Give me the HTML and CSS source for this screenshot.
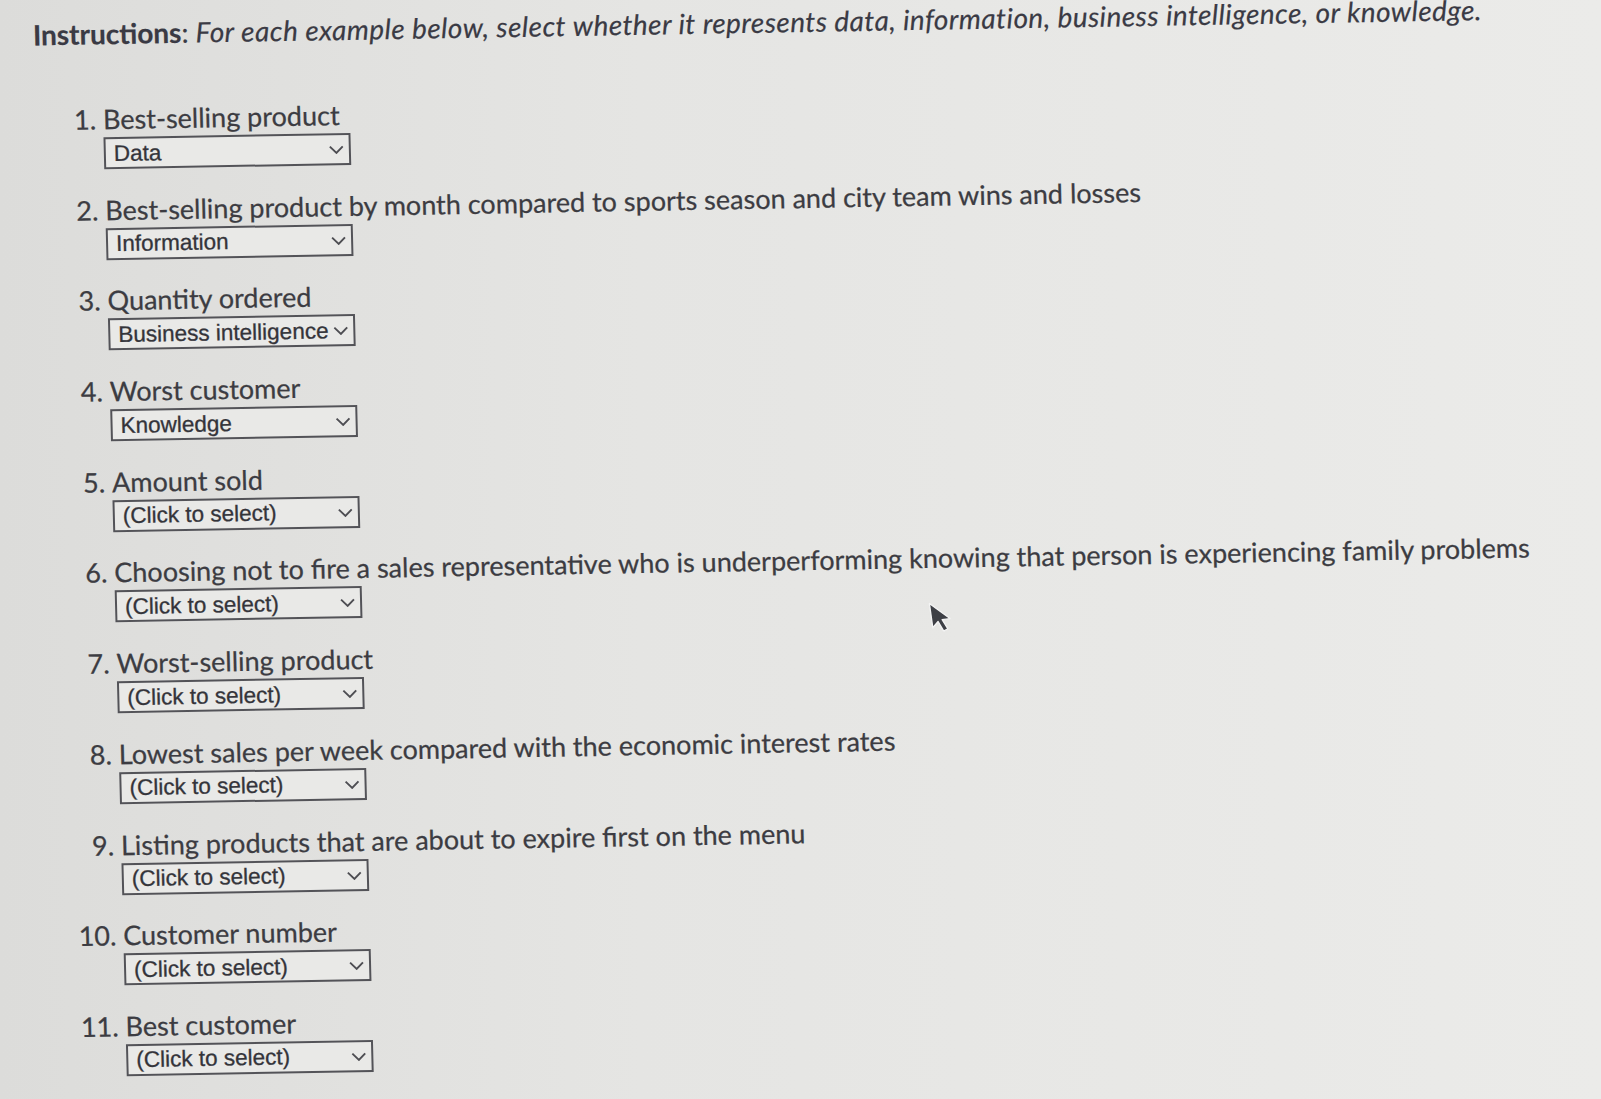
FILE: index.html
```html
<!DOCTYPE html>
<html lang="en">
<head>
<meta charset="utf-8">
<title>Data, information, business intelligence, or knowledge</title>
<link rel="stylesheet" href="styles.css">
</head>
<body>
<div class="page">
  <p class="instructions"><strong>Instructions</strong>: <em>For each example below, select whether it represents data, information, business intelligence, or knowledge.</em></p>
  <ol class="items">
    <li><div class="label">Best-selling product</div><div class="select"><span>Data</span><svg class="chev" viewBox="0 0 14 8"><path d="M1 1 L7 7 L13 1"/></svg></div></li>
    <li><div class="label">Best-selling product by month compared to sports season and city team wins and losses</div><div class="select"><span>Information</span><svg class="chev" viewBox="0 0 14 8"><path d="M1 1 L7 7 L13 1"/></svg></div></li>
    <li><div class="label">Quantity ordered</div><div class="select"><span>Business intelligence</span><svg class="chev" viewBox="0 0 14 8"><path d="M1 1 L7 7 L13 1"/></svg></div></li>
    <li><div class="label">Worst customer</div><div class="select"><span>Knowledge</span><svg class="chev" viewBox="0 0 14 8"><path d="M1 1 L7 7 L13 1"/></svg></div></li>
    <li><div class="label">Amount sold</div><div class="select"><span>(Click to select)</span><svg class="chev" viewBox="0 0 14 8"><path d="M1 1 L7 7 L13 1"/></svg></div></li>
    <li><div class="label">Choosing not to fire a sales representative who is underperforming knowing that person is experiencing family problems</div><div class="select"><span>(Click to select)</span><svg class="chev" viewBox="0 0 14 8"><path d="M1 1 L7 7 L13 1"/></svg></div></li>
    <li><div class="label">Worst-selling product</div><div class="select"><span>(Click to select)</span><svg class="chev" viewBox="0 0 14 8"><path d="M1 1 L7 7 L13 1"/></svg></div></li>
    <li><div class="label">Lowest sales per week compared with the economic interest rates</div><div class="select"><span>(Click to select)</span><svg class="chev" viewBox="0 0 14 8"><path d="M1 1 L7 7 L13 1"/></svg></div></li>
    <li><div class="label">Listing products that are about to expire first on the menu</div><div class="select"><span>(Click to select)</span><svg class="chev" viewBox="0 0 14 8"><path d="M1 1 L7 7 L13 1"/></svg></div></li>
    <li><div class="label">Customer number</div><div class="select"><span>(Click to select)</span><svg class="chev" viewBox="0 0 14 8"><path d="M1 1 L7 7 L13 1"/></svg></div></li>
    <li><div class="label">Best customer</div><div class="select"><span>(Click to select)</span><svg class="chev" viewBox="0 0 14 8"><path d="M1 1 L7 7 L13 1"/></svg></div></li>
  </ol>
</div>
<svg class="cursor" viewBox="0 0 18 27"><path d="M2 1 L2 21 L7 16.5 L10.5 25 L14 23.5 L10.5 15.5 L17 15.5 Z"/></svg>
</body>
</html>
```

FILE: styles.css
```css
html, body {
  margin: 0;
  width: 1601px;
  height: 1099px;
  overflow: hidden;
}

body {
  background: linear-gradient(90deg, #dcdcda 0%, #e5e5e3 40%, #ebebe9 100%);
  font-family: Lato, "Open Sans", sans-serif;
  color: #3c3c42;
  position: relative;
}

.page {
  transform: matrix(1, -0.0175, 0.0248, 1, 0, 0);
  transform-origin: 0 0;
  padding: 20px 0 0 32px;
}

.instructions {
  display: inline-block;
  margin: 0;
  font-size: 28px;
  line-height: 30px;
  white-space: nowrap;
  color: #3a3a44;
  -webkit-text-stroke: 0.2px #3a3a44;
}

.instructions strong {
  font-weight: 700;
}

.instructions em {
  font-style: italic;
  letter-spacing: 0.45px;
}

.items {
  margin: 56px 0 0;
  padding: 0 0 0 68px;
  list-style: decimal;
}

.items li {
  font-size: 27px;
  line-height: 30px;
  margin-bottom: 25.7px;
  -webkit-text-stroke: 0.25px #3c3c42;
}

.label {
  white-space: nowrap;
}

.select {
  box-sizing: border-box;
  width: 247px;
  height: 32px;
  margin-top: 3px;
  border: 2px solid #535358;
  background: #e9e9e7;
  display: flex;
  align-items: center;
  justify-content: space-between;
  padding: 1px 5px 0 8px;
  font-family: "Liberation Sans", Arial, sans-serif;
  font-size: 22.5px;
  color: #34343a;
  -webkit-text-stroke: 0.3px #34343a;
}

.chev {
  width: 15px;
  height: 9px;
  flex: none;
}

.chev path {
  fill: none;
  stroke: #4e4e53;
  stroke-width: 1.8;
}

.cursor {
  position: absolute;
  left: 929px;
  top: 601px;
  width: 22px;
  height: 33px;
  transform: rotate(-8deg);
}

.cursor path {
  fill: #3e4046;
  stroke: #f4f4f4;
  stroke-width: 1.1;
  stroke-linejoin: round;
}
```
